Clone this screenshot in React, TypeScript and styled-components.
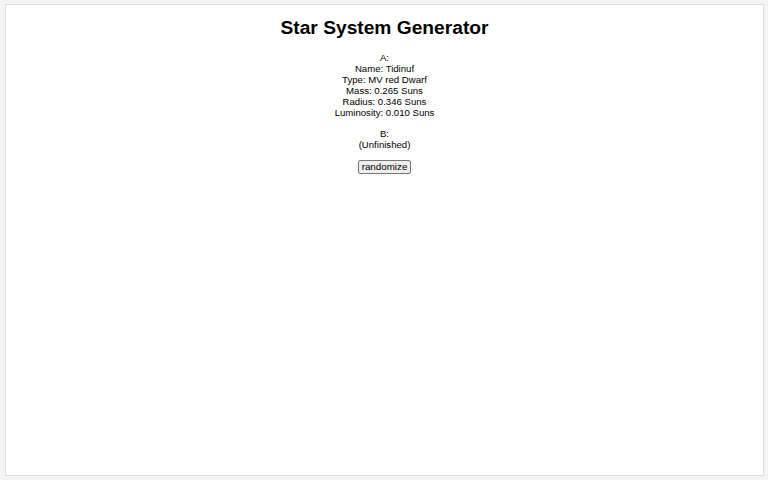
import React, {FC} from 'react';
import styled, {createGlobalStyle} from 'styled-components';

const GlobalStyle = createGlobalStyle`
  html, body {
    margin: 0;
    padding: 0;
    background: #f4f4f4;
  }

  body {
    font-family: "Liberation Sans", Arial, sans-serif;
    color: #000;
  }
`;

const star = {
  name: 'Tidinuf',
  type: 'MV red Dwarf',
  mass: 0.265,
  radius: 0.346,
  luminosity: 0.01,
};

const App: FC = () => (
  <>
    <GlobalStyle />
    <Page>
      <Card>
        <Title>Star System Generator</Title>
        <Info>
          <Line>A:</Line>
          <Line>Name: {star.name}</Line>
          <Line>Type: {star.type}</Line>
          <Line>Mass: {star.mass.toFixed(3)} Suns</Line>
          <Line>Radius: {star.radius.toFixed(3)} Suns</Line>
          <Line>Luminosity: {star.luminosity.toFixed(3)} Suns</Line>
        </Info>
        <Info>
          <Line>B:</Line>
          <Line>(Unfinished)</Line>
        </Info>
        <RandomButton type="button">randomize</RandomButton>
      </Card>
    </Page>
  </>
);

const Page = styled.div`
  box-sizing: border-box;
  height: 480px;
  padding: 4px 4px 4px 5px;
  display: flex;
`;

const Card = styled.main`
  flex: 1;
  display: flex;
  flex-direction: column;
  align-items: center;
  background: #fff;
  border: 1px solid #dcdcdc;
`;

const Title = styled.h1`
  margin: 11px 0 12px;
  font-size: 19.2px;
  font-weight: bold;
  line-height: 24px;
`;

const Info = styled.div`
  display: flex;
  flex-direction: column;
  align-items: center;
  margin-bottom: 10px;
  font-size: 9.6px;
  line-height: 11px;
`;

const Line = styled.div``;

const RandomButton = styled.button`
  padding: 1px 3px;
  font-family: inherit;
  font-size: 9.8px;
  line-height: 10px;
  color: #000;
  background: #efefef;
  border: 1px solid #767676;
  border-radius: 2px;
`;

export default App;
